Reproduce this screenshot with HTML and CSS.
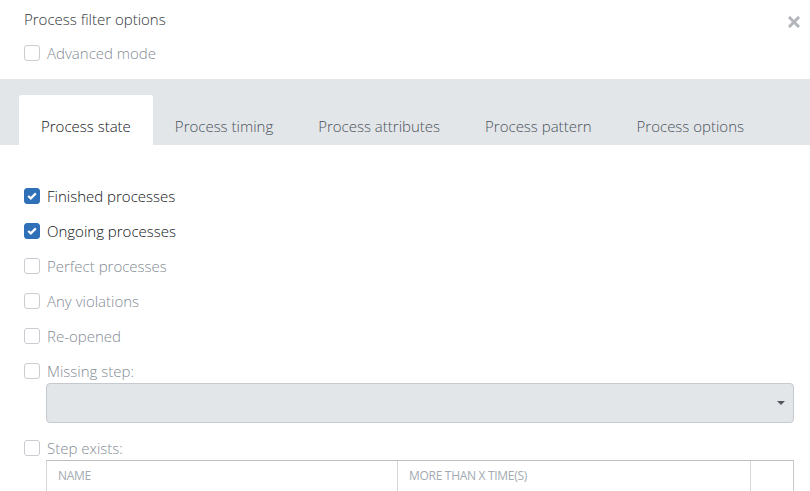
FILE: index.html
```html
<!DOCTYPE html>
<html>
<head>
<meta charset="utf-8">
<link rel="stylesheet" href="styles.css">
</head>
<body>
<div class="dialog">
  <div class="header">
    <div class="title-row">
      <div class="title">Process filter options</div>
      <button class="close" aria-label="Close">
        <svg width="12" height="12" viewBox="0 0 12 12"><path d="M2 2 L10 10 M10 2 L2 10" stroke="#b2b6ba" stroke-width="3" stroke-linecap="square"/></svg>
      </button>
    </div>
    <label class="check-row muted">
      <span class="box"></span><span>Advanced mode</span>
    </label>
  </div>
  <div class="tabbar">
    <div class="tab active">Process state</div>
    <div class="tab">Process timing</div>
    <div class="tab">Process attributes</div>
    <div class="tab">Process pattern</div>
    <div class="tab">Process options</div>
  </div>
  <div class="content">
    <label class="check-row checked">
      <span class="box"><svg width="10" height="8" viewBox="0 0 10 8"><path d="M1.2 4 L3.8 6.4 L8.8 1.4" fill="none" stroke="#fff" stroke-width="2.2"/></svg></span><span>Finished processes</span>
    </label>
    <label class="check-row checked">
      <span class="box"><svg width="10" height="8" viewBox="0 0 10 8"><path d="M1.2 4 L3.8 6.4 L8.8 1.4" fill="none" stroke="#fff" stroke-width="2.2"/></svg></span><span>Ongoing processes</span>
    </label>
    <label class="check-row muted"><span class="box"></span><span>Perfect processes</span></label>
    <label class="check-row muted"><span class="box"></span><span>Any violations</span></label>
    <label class="check-row muted"><span class="box"></span><span>Re-opened</span></label>
    <div class="group">
      <label class="check-row muted"><span class="box"></span><span>Missing step:</span></label>
      <div class="select"><span class="caret"></span></div>
    </div>
    <div class="group">
      <label class="check-row muted"><span class="box"></span><span>Step exists:</span></label>
      <div class="table">
        <div class="th name">NAME</div>
        <div class="th times">MORE THAN X TIME(S)</div>
        <div class="th last"></div>
      </div>
    </div>
  </div>
</div>
</body>
</html>
```
FILE: styles.css
```css
html, body {
  margin: 0;
  padding: 0;
  background: #fff;
  font-family: "Open Sans", "Noto Sans", sans-serif;
  font-size: 15px;
  font-weight: 300;
  overflow: hidden;
}
.dialog {
  width: 810px;
  height: 491px;
  overflow: hidden;
}
.header {
  padding: 9px 10px 16px 24px;
}
.title-row {
  display: flex;
  justify-content: space-between;
  align-items: flex-start;
  height: 20px;
}
.title {
  line-height: 20px;
  color: #2f3338;
}
.close {
  border: 0;
  background: none;
  padding: 0;
  margin-top: 7px;
  width: 12px;
  height: 12px;
  display: block;
}
.close svg { display: block; }
.check-row {
  display: flex;
  align-items: center;
  height: 20px;
  line-height: 20px;
}
.header .check-row { margin-top: 14px; }
.box {
  width: 16px;
  height: 16px;
  box-sizing: border-box;
  border: 1px solid #c9cdd1;
  border-radius: 3px;
  background: #fff;
  margin-right: 7px;
  display: flex;
  align-items: center;
  justify-content: center;
  flex: none;
}
.checked .box {
  background: #2f70b8;
  border-color: #2f70b8;
}
.checked { color: #111417; }
.muted { color: #838c95; }
.tabbar {
  background: #e3e6e9;
  display: flex;
  padding: 16px 0 0 19px;
  height: 66px;
  box-sizing: border-box;
}
.tab {
  height: 50px;
  box-sizing: border-box;
  padding: 21px 22px 0 22px;
  line-height: 20px;
  color: #4a525b;
  white-space: nowrap;
}
.tab + .tab { padding-right: 23px; }
.tab.active {
  background: #fff;
  border-radius: 3px 3px 0 0;
  color: #111417;
}
.content {
  padding: 41px 16px 0 24px;
  display: flex;
  flex-direction: column;
  gap: 15px;
}
.group {
  display: flex;
  flex-direction: column;
}
.select {
  margin: 2px 0 0 22px;
  height: 40px;
  box-sizing: border-box;
  background: #e3e6e9;
  border: 1px solid #c6cacf;
  border-radius: 4px;
  position: relative;
}
.caret {
  position: absolute;
  right: 8px;
  top: 17px;
  width: 0;
  height: 0;
  border-left: 4px solid transparent;
  border-right: 4px solid transparent;
  border-top: 4px solid #50575e;
}
.table {
  margin: 2px 0 0 22px;
  display: grid;
  grid-template-columns: 351px 353px 1fr;
  border-top: 1px solid #b9bec3;
  border-left: 1px solid #d4d7da;
  border-right: 1px solid #c6cacf;
}
.th {
  height: 30px;
  line-height: 30px;
  padding-left: 11px;
  font-size: 12px;
  font-weight: 400;
  color: #a3aab1;
  letter-spacing: -0.3px;
}
.th.name, .th.times { border-right: 1px solid #d4d7da; }
```
